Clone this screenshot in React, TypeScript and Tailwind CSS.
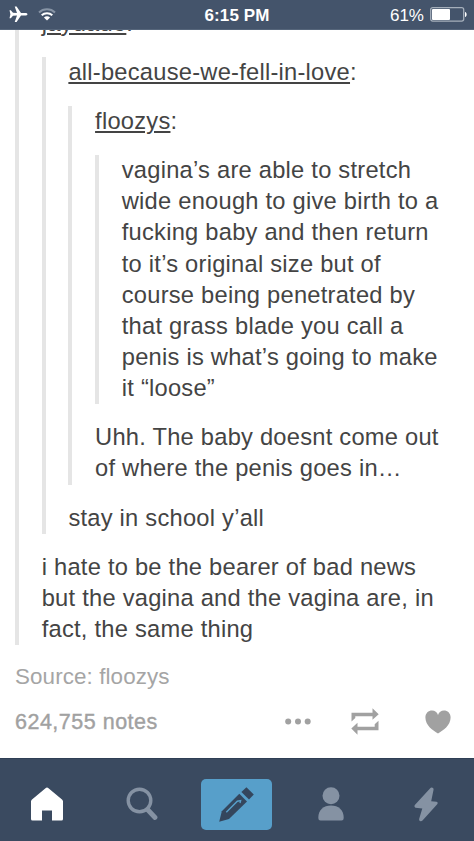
import React from "react";

type QuoteProps = {
  author?: string;
  children: React.ReactNode;
};

function Quote({ author, children }: QuoteProps) {
  return (
    <blockquote className="border-l-4 border-[#e5e5e5] pl-[22.7px] flex flex-col gap-[18px]">
      {author && (
        <p className="whitespace-nowrap">
          <a className="underline decoration-[1.5px] underline-offset-[2px]">{author}</a>:
        </p>
      )}
      {children}
    </blockquote>
  );
}

function Lines({ lines }: { lines: string[] }) {
  return (
    <p>
      {lines.map((line) => (
        <span key={line} className="block whitespace-nowrap">
          {line}
        </span>
      ))}
    </p>
  );
}

function StatusBar() {
  return (
    <header className="relative z-10 h-[30px] shrink-0 bg-[#44546b] border-b border-[#56667b] text-white flex items-center justify-between">
      <div className="flex items-center w-[160px] pl-[9px] gap-[10px]">
        <svg width="19" height="17" viewBox="0 0 19 17" fill="white">
          <path d="M18.5 8.2C18.5 9.1 17.3 9.5 16.2 9.5H12L7.6 16H5.7L8 9.6L4 9.8L1.8 12.2H.5L1.4 8.2L.5 4.2H1.8L4 6.7L8 6.9L5.7.5H7.6L12 7H16.2C17.3 7 18.5 7.4 18.5 8.2Z" />
        </svg>
        <svg width="18" height="13" viewBox="0 0 18 13" fill="none" strokeWidth="2">
          <path d="M1 4.4C5.4.3 12.6.3 17 4.4" stroke="#8794a5" />
          <path d="M3.7 7.3C6.6 4.5 11.4 4.5 14.3 7.3" stroke="white" />
          <path d="M9 12.6L5.9 9.5C7.6 7.9 10.4 7.9 12.1 9.5Z" fill="white" />
        </svg>
      </div>
      <span className="text-[17px] font-bold leading-none tracking-[0.1px] pt-[1px]">6:15 PM</span>
      <div className="flex items-center justify-end w-[160px] pr-[7px] gap-[6px]">
        <span className="text-[17px] leading-none pt-[1px]">61%</span>
        <svg width="37" height="15" viewBox="0 0 37 15">
          <rect x=".7" y=".7" width="33" height="13.4" rx="2" fill="none" stroke="#a5afbb" strokeWidth="1.3" />
          <rect x="2" y="2" width="18" height="11" rx="1" fill="white" />
          <path d="M35 5C37.2 5.6 37.2 9.4 35 10Z" fill="white" />
        </svg>
      </div>
    </header>
  );
}

function TabBar() {
  return (
    <nav className="h-[83px] shrink-0 bg-[#3a4a60] border-t border-[#2f3f55] flex items-center pt-[8px]">
      <div className="w-[94px] flex justify-center">
        <svg width="34" height="34" viewBox="0 0 34 34" fill="white">
          <path d="M17 .5Q17.8.5 18.5 1.2L32 12.5Q33 13.3 33 14.5V32Q33 33.5 31.5 33.5H22V23.5H12V33.5H2.5Q1 33.5 1 32V14.5Q1 13.3 2 12.5L15.5 1.2Q16.2.5 17 .5Z" />
        </svg>
      </div>
      <div className="w-[95px] flex justify-center">
        <svg width="32" height="34" viewBox="0 0 32 34" fill="none" stroke="#8592a3">
          <circle cx="13.5" cy="13.5" r="11.3" strokeWidth="3.4" />
          <path d="M21.5 22.5L29 30.5" strokeWidth="4.8" strokeLinecap="round" />
        </svg>
      </div>
      <div className="w-[95px] flex justify-center">
        <div className="w-[71px] h-[51px] rounded-[5px] bg-[#579fca] flex items-center justify-center">
          <svg width="35" height="35" viewBox="0 0 35 35" fill="#34465d">
            <path d="M27.4.2L34.8 7.5L30 12.5L22.4 5Z" />
            <path d="M20.3 6.8L28 14.6L10 32L.2 34.8L2.8 24.3Z" />
            <path d="M7.3 25.3L18.3 14.2L21.6 13.6L21 16" fill="none" stroke="#579fca" strokeWidth="1.4" />
          </svg>
        </div>
      </div>
      <div className="w-[94px] flex justify-center">
        <svg width="26" height="34" viewBox="0 0 26 34" fill="#8592a3">
          <circle cx="13" cy="8.8" r="8.5" />
          <path d="M.3 31C.3 23 5.5 18.6 13 18.6S25.7 23 25.7 31Q25.7 33.5 23.5 33.5H2.5Q.3 33.5 .3 31Z" />
        </svg>
      </div>
      <div className="flex-1 flex justify-center">
        <svg width="24" height="35" viewBox="0 0 24 35" fill="#8592a3">
          <path d="M16 1.5Q17 .2 18.5.7Q19.8 1.2 19.5 3L17.2 14.2L22.5 14.7Q24.5 15.3 23.2 17.3L8.5 33.5Q7.3 34.8 6 34Q4.8 33.3 5.2 31.7L8.3 21.5L1.5 20.7Q-.2 20 .8 18Z" />
        </svg>
      </div>
    </nav>
  );
}

export default function App() {
  return (
    <div className="w-[474px] h-[841px] flex flex-col bg-white overflow-hidden font-['Liberation_Sans',sans-serif]">
      <StatusBar />
      <main className="flex-1 min-h-0 overflow-hidden px-[15px]">
        {/* the post is scrolled, so its first author sits under the status bar */}
        <article className="-mt-[22.4px] text-[23.7px] leading-[31.15px] tracking-[0.24px] text-[#444444]">
          <Quote author="jaydado">
            <Quote author="all-because-we-fell-in-love">
              <Quote author="floozys">
                <Quote>
                  <Lines
                    lines={[
                      "vagina’s are able to stretch",
                      "wide enough to give birth to a",
                      "fucking baby and then return",
                      "to it’s original size but of",
                      "course being penetrated by",
                      "that grass blade you call a",
                      "penis is what’s going to make",
                      "it “loose”",
                    ]}
                  />
                </Quote>
                <Lines lines={["Uhh. The baby doesnt come out", "of where the penis goes in…"]} />
              </Quote>
              <p>stay in school y’all</p>
            </Quote>
            <Lines
              lines={[
                "i hate to be the bearer of bad news",
                "but the vagina and the vagina are, in",
                "fact, the same thing",
              ]}
            />
          </Quote>
        </article>
        <p className="mt-[16px] text-[22.4px] leading-[31px] tracking-[0.1px] text-[#a5a5a5]">Source: floozys</p>
        <footer className="mt-[14px] h-[31px] flex items-center text-[#a1a1a1]">
          <span className="text-[21.5px] tracking-[0.5px] [-webkit-text-stroke:0.4px_#a1a1a1]">624,755 notes</span>
          <div className="ml-auto flex items-center pr-[8px]">
            <svg width="26" height="7" viewBox="0 0 26 7" fill="#a1a1a1" className="mr-[40px]">
              <circle cx="3.2" cy="3.5" r="3" />
              <circle cx="13" cy="3.5" r="3" />
              <circle cx="22.7" cy="3.5" r="3" />
            </svg>
            <svg width="28" height="27" viewBox="0 0 28 27" fill="#a1a1a1" className="mr-[46px]">
              <path d="M.5 13.5V4.8H21.5V.3L27.7 6.3L21.5 11.8V8.3H4.3V10Z" />
              <path d="M27.5 12.8V22.3H6.5V26.8L.3 20.6L6.5 14.8V18.8H23.7V16.3Z" />
            </svg>
            <svg width="26" height="24" viewBox="0 0 26 24" fill="#a1a1a1">
              <path d="M13 23.5C8 20.5.4 15.5.4 7.5C.4 3 3.5.4 7 .4C10 .4 12 2 13 5C14 2 16 .4 19 .4C22.5.4 25.6 3 25.6 7.5C25.6 15.5 18 20.5 13 23.5Z" />
            </svg>
          </div>
        </footer>
      </main>
      <TabBar />
    </div>
  );
}
